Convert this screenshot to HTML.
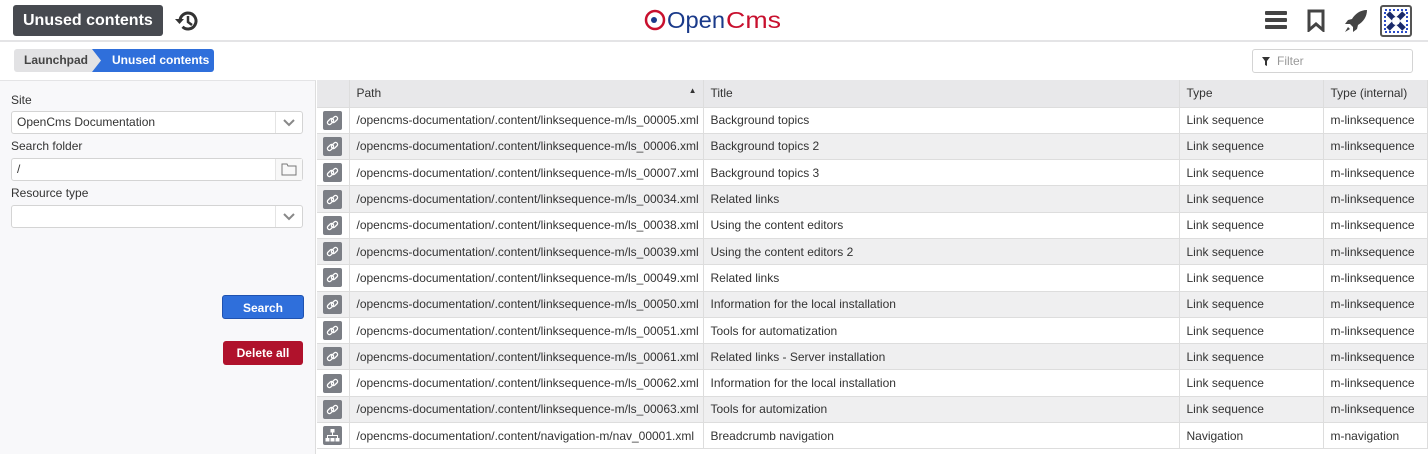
<!DOCTYPE html>
<html><head><meta charset="utf-8"><style>
*{box-sizing:border-box;margin:0;padding:0}
body{width:1428px;height:454px;overflow:hidden;background:#fff;font-family:"Liberation Sans",sans-serif;font-size:12px;color:#333;position:relative}
.hdr{position:absolute;left:0;top:0;width:1428px;height:42px;border-bottom:2px solid #e4e4e6;background:#fff}
.title{position:absolute;left:13px;top:5px;width:150px;height:31px;background:#474a50;border-radius:3px;color:#fff;font-size:16px;font-weight:bold;line-height:31px;padding-left:10px}
.bc{position:absolute;top:49px;height:23px;line-height:23px;font-size:12px;font-weight:bold}
.left{position:absolute;left:0;top:80px;width:316px;height:374px;background:#f8f8fa;border-top:1px solid #e4e4e6;border-right:1px solid #ddd}
.lbl{position:absolute;left:11px;font-size:12px;color:#333}
.inp{position:absolute;left:11px;width:292px;height:23px;background:#fff;border:1px solid #d4d4d4;border-radius:3px;font-size:12px;line-height:21px;padding-left:5px}
.inp .b{position:absolute;right:0;top:0;width:27px;height:21px;border-left:1px solid #e4e4e4;text-align:center;color:#888}
.btn{position:absolute;height:24px;border-radius:3px;color:#fff;font-weight:bold;text-align:center;line-height:24px;font-size:12px}
table{position:absolute;left:317px;top:80px;width:1111px;border-collapse:collapse}
td,th{height:26.3px;border-right:1px solid #ddd;border-bottom:1px solid #ddd;padding-left:7px;text-align:left;font-weight:normal;white-space:nowrap}
th{background:#e8e8ea;height:27px}
tr:nth-child(odd) td{background:#efeff0}
td.ic{padding:0;text-align:center}
.i{display:inline-block;width:19px;height:19px;background:#7b7e85;border-radius:2px;vertical-align:middle;position:relative}
.i svg{position:absolute;left:0;top:0}
</style></head><body>
<svg width="0" height="0" style="position:absolute"><defs>
<symbol id="lk" viewBox="0 0 19 19"><g fill="none" stroke="#fff" stroke-width="1.3"><rect x="4" y="8.5" width="7" height="4" rx="2" transform="rotate(-45 7.5 10.5)"/><rect x="8" y="6.5" width="7" height="4" rx="2" transform="rotate(-45 11.5 8.5)"/></g></symbol>
<symbol id="nv" viewBox="0 0 19 19"><g fill="#fff"><rect x="7.5" y="3" width="4" height="3.5"/><rect x="9" y="6.5" width="1" height="3"/><rect x="4" y="9" width="11" height="1"/><rect x="4" y="9" width="1" height="3"/><rect x="14" y="9" width="1" height="3"/><rect x="2.5" y="12" width="4" height="3.5"/><rect x="7.5" y="12" width="4" height="3.5"/><rect x="12.5" y="12" width="4" height="3.5"/></g></symbol>
<symbol id="chev" viewBox="0 0 12 8"><path d="M1 1l5 5 5-5" fill="none" stroke="#888" stroke-width="2"/></symbol>
</defs></svg>
<div class="hdr">
<div class="title">Unused contents</div>
<svg style="position:absolute;left:174px;top:8px" width="26" height="26" viewBox="0 0 26 26"><path d="M6 13a8 8 0 1 1 2.5 5.8" fill="none" stroke="#333" stroke-width="3"/><path d="M1 11h9l-4.5 5z" fill="#333"/><path d="M14 8v6l4 3" fill="none" stroke="#333" stroke-width="2.5"/></svg>
<svg style="position:absolute;left:644px;top:6px" width="140" height="30" viewBox="0 0 140 30"><circle cx="11" cy="14" r="9" fill="none" stroke="#c8102e" stroke-width="2.5"/><circle cx="10" cy="14" r="3" fill="#1a3a8a"/><text x="23" y="22" font-family="Liberation Sans" font-size="23" fill="#1a3a8a" textLength="58" lengthAdjust="spacingAndGlyphs">Open</text><text x="82" y="22" font-family="Liberation Sans" font-size="23" fill="#c8102e" textLength="55" lengthAdjust="spacingAndGlyphs">Cms</text></svg>
<div style="position:absolute;left:1265px;top:11px;width:22px;height:4px;background:#444;border-radius:1px"></div>
<div style="position:absolute;left:1265px;top:18px;width:22px;height:4px;background:#444;border-radius:1px"></div>
<div style="position:absolute;left:1265px;top:25px;width:22px;height:4px;background:#444;border-radius:1px"></div>
<svg style="position:absolute;left:1307px;top:9px" width="18" height="23" viewBox="0 0 18 23"><path d="M2 2h14v19l-7-6-7 6z" fill="none" stroke="#444" stroke-width="3"/></svg>
<svg style="position:absolute;left:1343px;top:8px" width="26" height="26" viewBox="0 0 26 26"><path d="M24 2c-7 0-12 4-15 9l-4 1-3 4 5 0 3 3 0 5 4-3 1-4c5-3 9-8 9-15z" fill="#444"/><path d="M5 19l-3 5 5-3" fill="#444"/></svg>
<div style="position:absolute;left:1380px;top:5px;width:32px;height:32px;border:2px solid #555;border-radius:3px;background:#fff"><svg width="28" height="28" viewBox="0 0 28 28"><rect x="3" y="3" width="22" height="22" fill="none" stroke="#2a4cc8" stroke-width="2" stroke-dasharray="2 2"/><path d="M6 6l16 16M22 6L6 22" stroke="#1a2a6a" stroke-width="5"/><circle cx="14" cy="14" r="4" fill="#fff"/></svg></div>
</div>
<div class="bc" style="left:14px;width:90px;background:#e2e2e4;color:#444;padding-left:10px;border-radius:3px 0 0 3px">Launchpad</div>
<div class="bc" style="left:92px;width:122px;background:#2f6fdb;color:#fff;padding-left:20px;border-radius:0 3px 3px 0;clip-path:polygon(0 0,100% 0,100% 100%,0 100%,9px 50%)">Unused contents</div>
<div style="position:absolute;left:1252px;top:49px;width:161px;height:24px;border:1px solid #d4d4d4;border-radius:3px;color:#999;line-height:22px;padding-left:24px">Filter<svg style="position:absolute;left:9px;top:7px" width="8" height="9"><path d="M0 0h8L5 4v5L3 8V4z" fill="#333"/></svg></div>
<div class="left">
<div class="lbl" style="top:12px">Site</div>
<div class="inp" style="top:30px">OpenCms Documentation<div class="b"><svg width="12" height="8" style="margin-top:7px"><use href="#chev"/></svg></div></div>
<div class="lbl" style="top:58px">Search folder</div>
<div class="inp" style="top:77px">/<div class="b" style="background:#f8f8f8"><svg width="16" height="13" viewBox="0 0 16 13" style="margin-top:4px"><path d="M1 1h5l1 2h8v9H1z" fill="none" stroke="#777"/></svg></div></div>
<div class="lbl" style="top:105px">Resource type</div>
<div class="inp" style="top:124px"><div class="b"><svg width="12" height="8" style="margin-top:7px"><use href="#chev"/></svg></div></div>
<div class="btn" style="left:222px;top:214px;width:82px;background:#2f6fdb;border:1px solid #1f52b0">Search</div>
<div class="btn" style="left:223px;top:260px;width:80px;background:#b0122c">Delete all</div>
</div>
<table>
<tr><th style="width:32px"></th><th style="width:354px">Path<span style="float:right;margin-right:6px;font-size:8px">▲</span></th><th style="width:476px">Title</th><th style="width:144px">Type</th><th>Type (internal)</th></tr>
<tr><td class="ic"><span class="i"><svg width="19" height="19"><use href="#lk"/></svg></span></td><td>/opencms-documentation/.content/linksequence-m/ls_00005.xml</td><td>Background topics</td><td>Link sequence</td><td>m-linksequence</td></tr>
<tr><td class="ic"><span class="i"><svg width="19" height="19"><use href="#lk"/></svg></span></td><td>/opencms-documentation/.content/linksequence-m/ls_00006.xml</td><td>Background topics 2</td><td>Link sequence</td><td>m-linksequence</td></tr>
<tr><td class="ic"><span class="i"><svg width="19" height="19"><use href="#lk"/></svg></span></td><td>/opencms-documentation/.content/linksequence-m/ls_00007.xml</td><td>Background topics 3</td><td>Link sequence</td><td>m-linksequence</td></tr>
<tr><td class="ic"><span class="i"><svg width="19" height="19"><use href="#lk"/></svg></span></td><td>/opencms-documentation/.content/linksequence-m/ls_00034.xml</td><td>Related links</td><td>Link sequence</td><td>m-linksequence</td></tr>
<tr><td class="ic"><span class="i"><svg width="19" height="19"><use href="#lk"/></svg></span></td><td>/opencms-documentation/.content/linksequence-m/ls_00038.xml</td><td>Using the content editors</td><td>Link sequence</td><td>m-linksequence</td></tr>
<tr><td class="ic"><span class="i"><svg width="19" height="19"><use href="#lk"/></svg></span></td><td>/opencms-documentation/.content/linksequence-m/ls_00039.xml</td><td>Using the content editors 2</td><td>Link sequence</td><td>m-linksequence</td></tr>
<tr><td class="ic"><span class="i"><svg width="19" height="19"><use href="#lk"/></svg></span></td><td>/opencms-documentation/.content/linksequence-m/ls_00049.xml</td><td>Related links</td><td>Link sequence</td><td>m-linksequence</td></tr>
<tr><td class="ic"><span class="i"><svg width="19" height="19"><use href="#lk"/></svg></span></td><td>/opencms-documentation/.content/linksequence-m/ls_00050.xml</td><td>Information for the local installation</td><td>Link sequence</td><td>m-linksequence</td></tr>
<tr><td class="ic"><span class="i"><svg width="19" height="19"><use href="#lk"/></svg></span></td><td>/opencms-documentation/.content/linksequence-m/ls_00051.xml</td><td>Tools for automatization</td><td>Link sequence</td><td>m-linksequence</td></tr>
<tr><td class="ic"><span class="i"><svg width="19" height="19"><use href="#lk"/></svg></span></td><td>/opencms-documentation/.content/linksequence-m/ls_00061.xml</td><td>Related links - Server installation</td><td>Link sequence</td><td>m-linksequence</td></tr>
<tr><td class="ic"><span class="i"><svg width="19" height="19"><use href="#lk"/></svg></span></td><td>/opencms-documentation/.content/linksequence-m/ls_00062.xml</td><td>Information for the local installation</td><td>Link sequence</td><td>m-linksequence</td></tr>
<tr><td class="ic"><span class="i"><svg width="19" height="19"><use href="#lk"/></svg></span></td><td>/opencms-documentation/.content/linksequence-m/ls_00063.xml</td><td>Tools for automization</td><td>Link sequence</td><td>m-linksequence</td></tr>
<tr><td class="ic"><span class="i"><svg width="19" height="19"><use href="#nv"/></svg></span></td><td>/opencms-documentation/.content/navigation-m/nav_00001.xml</td><td>Breadcrumb navigation</td><td>Navigation</td><td>m-navigation</td></tr>
</table>
</body></html>
